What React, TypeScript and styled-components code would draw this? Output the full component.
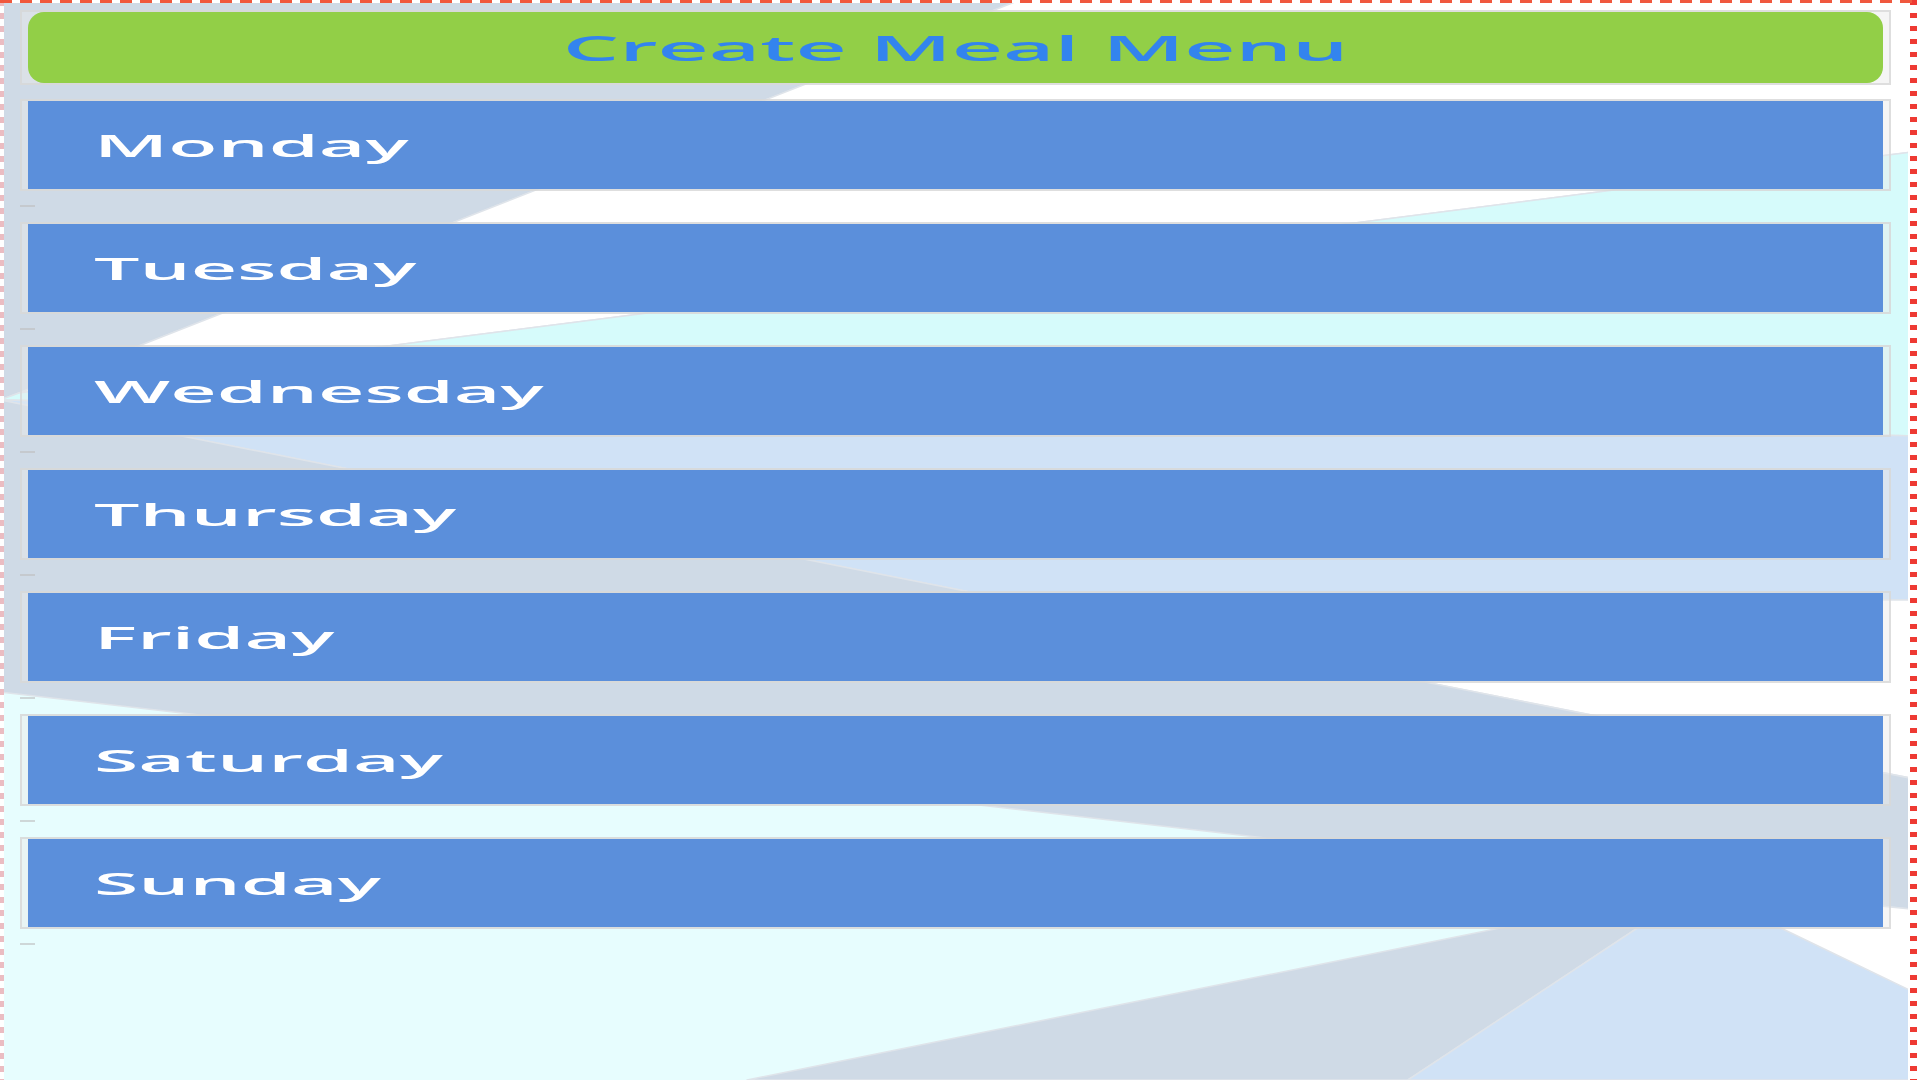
import React from 'react';
import styled, { createGlobalStyle } from 'styled-components';

const GlobalStyle = createGlobalStyle`
  html, body {
    margin: 0;
    padding: 0;
    background: #ffffff;
    overflow: hidden;
  }
  body {
    font-family: 'Open Sans', 'Noto Sans', sans-serif;
  }
`;

// the outer frame with the dashed debug edges
const Frame = styled.div`
  position: relative;
  width: 1920px;
  height: 1080px;
  background: #ffffff;
  overflow: hidden;

  &::after {
    content: '';
    position: absolute;
    inset: 0;
    pointer-events: none;
    background:
      repeating-linear-gradient(90deg, #f0583e 0 12px, transparent 12px 20px) top left / 100% 3px no-repeat,
      repeating-linear-gradient(180deg, #ee3a33 0 5px, transparent 5px 13px) 1910px 0 / 7px 100% no-repeat,
      repeating-linear-gradient(180deg, rgba(226, 160, 168, 0.7) 0 6px, transparent 6px 13px) top left / 4px 100% no-repeat;
  }
`;

const Canvas = styled.div`
  position: relative;
  margin: 3px 0 0 4px;
  width: 1904px;
  height: 1077px;
  overflow: hidden;
`;

const Backdrop = styled.svg`
  position: absolute;
  inset: 0;
  width: 100%;
  height: 100%;
  z-index: 0;
`;

const Content = styled.div`
  position: relative;
  z-index: 1;
  display: flex;
  flex-direction: column;
  padding: 7px 17px 0 16px;
`;

const Card = styled.div<{ $gap?: number }>`
  border: 2px solid rgba(214, 214, 214, 0.75);
  background: rgba(232, 232, 232, 0.45);
  padding: 0 6px;
  margin-bottom: ${(p) => p.$gap ?? 0}px;
`;

const Header = styled.div`
  height: 71px;
  border-radius: 16px;
  background: #92cf47;
  display: flex;
  align-items: center;
  justify-content: center;
`;

const Title = styled.span`
  display: inline-block;
  font-size: 35px;
  font-weight: 600;
  line-height: 1;
  color: #3384ee;
  transform: scaleX(2.54);
  transform-origin: 50% 50%;
  white-space: nowrap;
`;

const DayItem = styled.div`
  display: flex;
  flex-direction: column;
`;

const DayBar = styled.div`
  height: 88px;
  background: #5b8fdb;
  display: flex;
  align-items: center;
  padding-left: 66px;
`;

const DayLabel = styled.span`
  display: inline-block;
  font-size: 31px;
  font-weight: 600;
  line-height: 1;
  color: #ffffff;
  transform: scaleX(2.6);
  transform-origin: 0 50%;
  white-space: nowrap;
`;

const Tick = styled.div`
  width: 15px;
  height: 2px;
  margin: 14px 0 15px;
  background: rgba(190, 190, 190, 0.6);
`;

const days = ['Monday', 'Tuesday', 'Wednesday', 'Thursday', 'Friday', 'Saturday', 'Sunday'];

const G = '#cfdae6';
const W = '#ffffff';
const C = '#d6fbfb';
const LB = '#d0e2f6';
const LC = '#e7fdfe';

const shapes: [string, string][] = [
  [G, '0,0 1020,0 19,393 0,400'],
  [W, '1020,0 1920,0 1920,151 19,393'],
  [C, '19,393 1920,151 1920,436 0,400'],
  [LB, '0,400 1920,436 1920,600 1000,598'],
  [W, '1000,598 1920,600 1920,780'],
  [G, '0,400 1920,780 1920,910 1698,888 0,692'],
  [G, '1698,888 747,1080 1408,1080'],
  [LB, '1698,888 1408,1080 1920,1080 1920,995'],
  [W, '1698,888 1920,995 1920,910'],
];

function LowPoly() {
  return (
    <Backdrop viewBox="4 3 1904 1077" preserveAspectRatio="none" aria-hidden="true">
      <rect x="0" y="0" width="1920" height="1080" fill={LC} />
      {shapes.map(([fill, pts], i) => (
        <polygon key={i} points={pts} fill={fill} stroke="#dfe4ea" strokeWidth="1.5" strokeLinejoin="round" />
      ))}
    </Backdrop>
  );
}

export default function App() {
  return (
    <>
      <GlobalStyle />
      <Frame>
        <Canvas>
          <LowPoly />
          <Content>
            <Card $gap={14}>
              <Header>
                <Title>Create Meal Menu</Title>
              </Header>
            </Card>
            {days.map((d) => (
              <DayItem key={d}>
                <Card>
                  <DayBar>
                    <DayLabel>{d}</DayLabel>
                  </DayBar>
                </Card>
                <Tick />
              </DayItem>
            ))}
          </Content>
        </Canvas>
      </Frame>
    </>
  );
}
